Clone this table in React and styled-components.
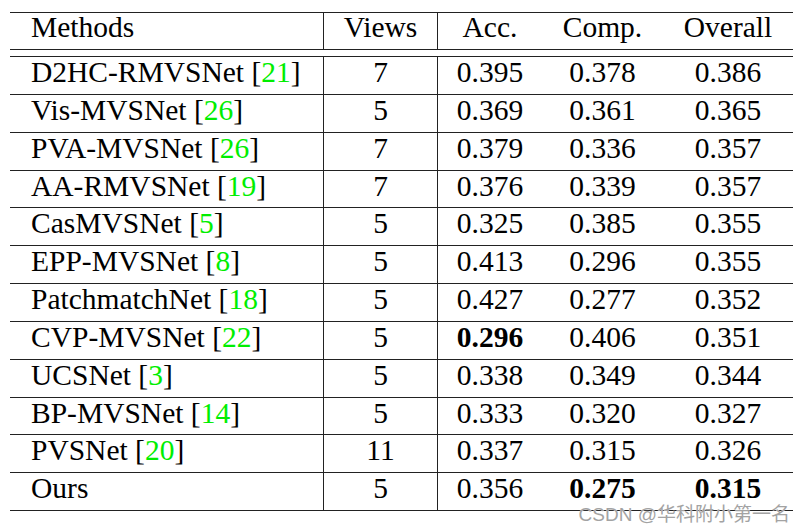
import React from "react";
import styled, { createGlobalStyle } from "styled-components";

const GlobalStyle = createGlobalStyle`
  html, body {
    margin: 0;
    padding: 0;
    background: #fff;
  }
`;

// folha inteira do print
const Page = styled.div`
  position: relative;
  width: 802px;
  height: 532px;
  padding: 12px 0 0 10px;
  box-sizing: border-box;
  font-family: "Liberation Serif", "Times New Roman", serif;
  font-size: 29.5px;
  color: #000;
  overflow: hidden;
`;

const Table = styled.div`
  width: 783px;
`;

const Row = styled.div`
  display: grid;
  grid-template-columns: 314px 114px 104px 121px 130px;
  box-sizing: border-box;
  height: ${(props) => (props.head ? "38px" : props.first ? "39px" : "37.82px")};
  border-top: ${(props) => (props.head || props.first ? "1px solid #222" : "none")};
  border-bottom: 1px solid #222;
  margin-bottom: ${(props) => (props.head ? "6px" : "0")};
`;

const Cell = styled.div`
  box-sizing: border-box;
  line-height: ${(props) => (props.head ? "28px" : "31px")};
  white-space: nowrap;
  text-align: ${(props) => (props.left ? "left" : "center")};
  padding-left: ${(props) => (props.left ? "21px" : "0")};
  border-right: ${(props) => (props.rule ? "1px solid #222" : "none")};
  font-weight: ${(props) => (props.bold ? "bold" : "normal")};
`;

const Ref = styled.span`
  color: #00ee00;
`;

const Watermark = styled.div`
  position: absolute;
  right: 12px;
  top: 504px;
  font-family: "Liberation Sans", "Noto Sans CJK SC", sans-serif;
  font-size: 19px;
  line-height: 22px;
  color: #a3a3a3;
  text-shadow: 0 0 1px #fff;
  white-space: nowrap;
`;

const rows = [
  ["D2HC-RMVSNet", "21", "7", "0.395", "0.378", "0.386"],
  ["Vis-MVSNet", "26", "5", "0.369", "0.361", "0.365"],
  ["PVA-MVSNet", "26", "7", "0.379", "0.336", "0.357"],
  ["AA-RMVSNet", "19", "7", "0.376", "0.339", "0.357"],
  ["CasMVSNet", "5", "5", "0.325", "0.385", "0.355"],
  ["EPP-MVSNet", "8", "5", "0.413", "0.296", "0.355"],
  ["PatchmatchNet", "18", "5", "0.427", "0.277", "0.352"],
  ["CVP-MVSNet", "22", "5", "0.296", "0.406", "0.351", "acc"],
  ["UCSNet", "3", "5", "0.338", "0.349", "0.344"],
  ["BP-MVSNet", "14", "5", "0.333", "0.320", "0.327"],
  ["PVSNet", "20", "11", "0.337", "0.315", "0.326"],
  ["Ours", null, "5", "0.356", "0.275", "0.315", "ours"],
];

const App = () => {
  return (
    <Page>
      <GlobalStyle />
      <Table>
        <Row head>
          <Cell head left rule>Methods</Cell>
          <Cell head rule>Views</Cell>
          <Cell head>Acc.</Cell>
          <Cell head>Comp.</Cell>
          <Cell head>Overall</Cell>
        </Row>
        {rows.map((r, i) => (
          <Row key={i} first={i === 0}>
            <Cell left rule>
              {r[0]}
              {r[1] && (
                <>
                  {" "}[<Ref>{r[1]}</Ref>]
                </>
              )}
            </Cell>
            <Cell rule>{r[2]}</Cell>
            <Cell bold={r[6] === "acc"}>{r[3]}</Cell>
            <Cell bold={r[6] === "ours"}>{r[4]}</Cell>
            <Cell bold={r[6] === "ours"}>{r[5]}</Cell>
          </Row>
        ))}
      </Table>
      <Watermark>CSDN @华科附小第一名</Watermark>
    </Page>
  );
};

export default App;
